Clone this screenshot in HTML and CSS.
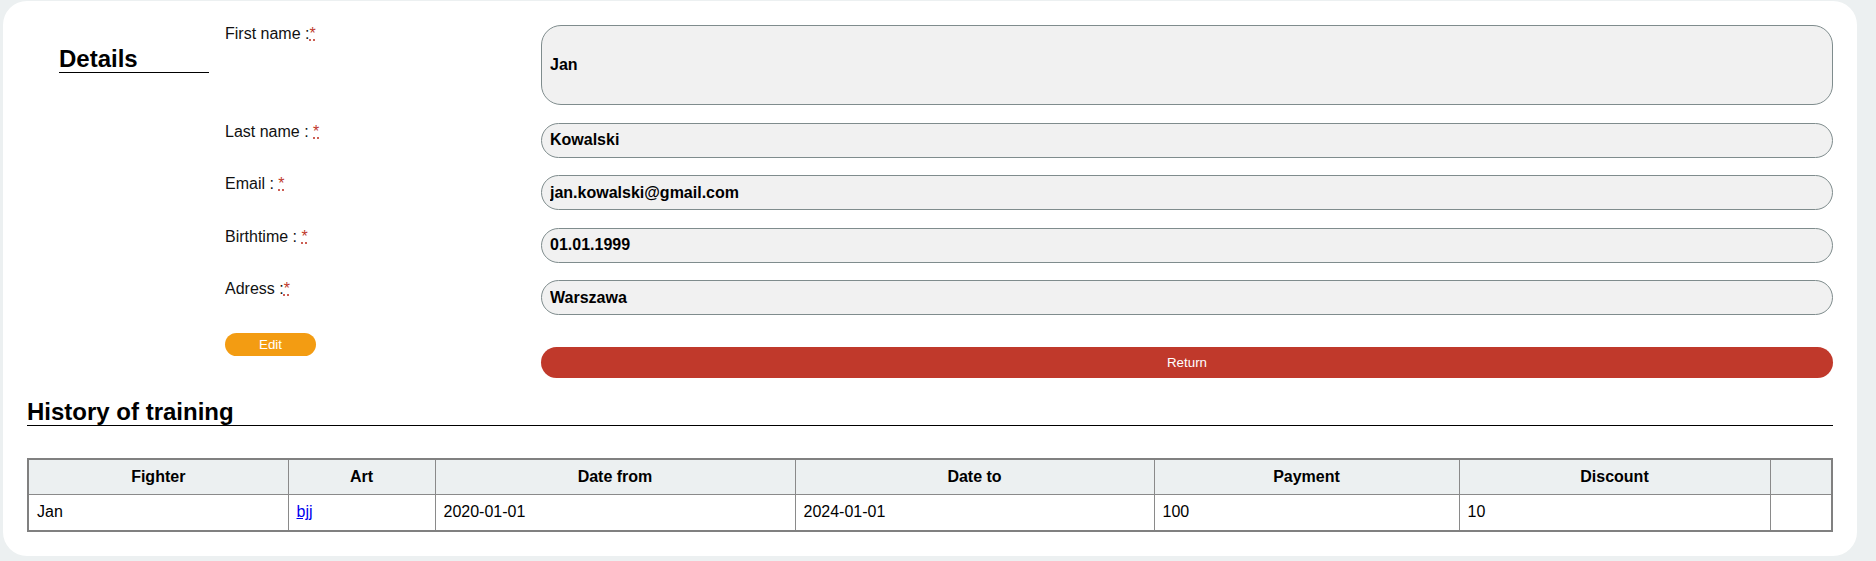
FILE: index.html
```html
<!DOCTYPE html>
<html>
<head>
    <meta charset="UTF-8">
    <link rel="stylesheet" href="styles.css">
</head>
<body>
<div class="card">
    <form class="details">
        <h2 class="details-title">Details</h2>

        <label class="field-label" for="firstName">First name :<abbr title="required">*</abbr></label>
        <input class="field field-tall" type="text" id="firstName" value="Jan" readonly>

        <label class="field-label" for="lastName">Last name : <abbr title="required">*</abbr></label>
        <input class="field" type="text" id="lastName" value="Kowalski" readonly>

        <label class="field-label" for="email">Email : <abbr title="required">*</abbr></label>
        <input class="field" type="text" id="email" value="jan.kowalski@gmail.com" readonly>

        <label class="field-label" for="birthtime">Birthtime : <abbr title="required">*</abbr></label>
        <input class="field" type="text" id="birthtime" value="01.01.1999" readonly>

        <label class="field-label" for="adress">Adress :<abbr title="required">*</abbr></label>
        <input class="field" type="text" id="adress" value="Warszawa" readonly>

        <div class="edit-cell">
            <button type="button" class="btn btn-edit">Edit</button>
        </div>
        <div class="return-cell">
            <button type="button" class="btn btn-return">Return</button>
        </div>
    </form>

    <h2 class="history-title">History of training</h2>

    <table class="history">
        <colgroup>
            <col style="width: 260px">
            <col style="width: 147px">
            <col style="width: 360px">
            <col style="width: 359px">
            <col style="width: 305px">
            <col style="width: 311px">
            <col>
        </colgroup>
        <thead>
        <tr>
            <th>Fighter</th>
            <th>Art</th>
            <th>Date from</th>
            <th>Date to</th>
            <th>Payment</th>
            <th>Discount</th>
            <th></th>
        </tr>
        </thead>
        <tbody>
        <tr>
            <td>Jan</td>
            <td><a href="#">bjj</a></td>
            <td>2020-01-01</td>
            <td>2024-01-01</td>
            <td>100</td>
            <td>10</td>
            <td></td>
        </tr>
        </tbody>
    </table>
</div>
</body>
</html>
```

FILE: styles.css
```css
:root {
    --page-bg: #ecf0f1;
    --field-border: #7f8c8d;
    --danger: #c0392b;
    --warning: #f39c12;
}

* {
    margin: 0;
    padding: 0;
    box-sizing: border-box;
    font-family: 'Liberation Sans', Arial, sans-serif;
}

body {
    background: var(--page-bg);
    padding: 1px 19px 8px 3px;
    color: #000;
}

.card {
    background: #fff;
    border-radius: 24px;
    padding: 24px;
}

.details {
    display: grid;
    grid-template-columns: 198px 316px 1fr;
    row-gap: 17.5px;
    align-items: start;
}

.details-title {
    grid-column: 1;
    grid-row: 1;
    margin: 20px 0 0 32px;
    width: 150px;
    font-size: 24px;
    line-height: 27px;
    font-weight: bold;
    border-bottom: 1px solid #000;
}

.field-label {
    grid-column: 2;
    padding-top: 1px;
    font-size: 16px;
    line-height: 16px;
    color: #111;
}

.details-title + .field-label {
    grid-row: 1;
}

abbr {
    color: var(--danger);
    text-decoration: underline dotted;
    cursor: help;
}

.field {
    grid-column: 3;
    width: 100%;
    height: 35px;
    padding: 0 8px;
    border: 1px solid var(--field-border);
    border-radius: 20px;
    background: #f1f1f1;
    font-size: 16px;
    font-weight: bold;
    color: #000;
    outline: none;
}

.field-tall {
    grid-row: 1;
    height: 80px;
}

.edit-cell {
    grid-column: 2;
}

.return-cell {
    grid-column: 3;
    padding-top: 14px;
}

.btn {
    border: none;
    color: #fff;
    font-size: 13.33px;
    cursor: pointer;
}

.btn-edit {
    width: 91px;
    height: 23px;
    border-radius: 12px;
    background: var(--warning);
}

.btn-return {
    width: 100%;
    height: 31px;
    border-radius: 16px;
    background: var(--danger);
}

.history-title {
    margin-top: 20px;
    font-size: 24px;
    line-height: 27px;
    font-weight: bold;
    border-bottom: 1px solid #000;
}

.history {
    margin-top: 32px;
    width: 100%;
    table-layout: fixed;
    border-collapse: collapse;
    border: 2px solid #808080;
    font-size: 16px;
}

.history th,
.history td {
    border: 1px solid #8a8a8a;
    height: 36px;
    padding: 0 8px;
}

.history th {
    background: var(--page-bg);
    font-weight: bold;
    text-align: center;
}

.history td {
    text-align: left;
}

.history a {
    color: #0000ee;
}
```
